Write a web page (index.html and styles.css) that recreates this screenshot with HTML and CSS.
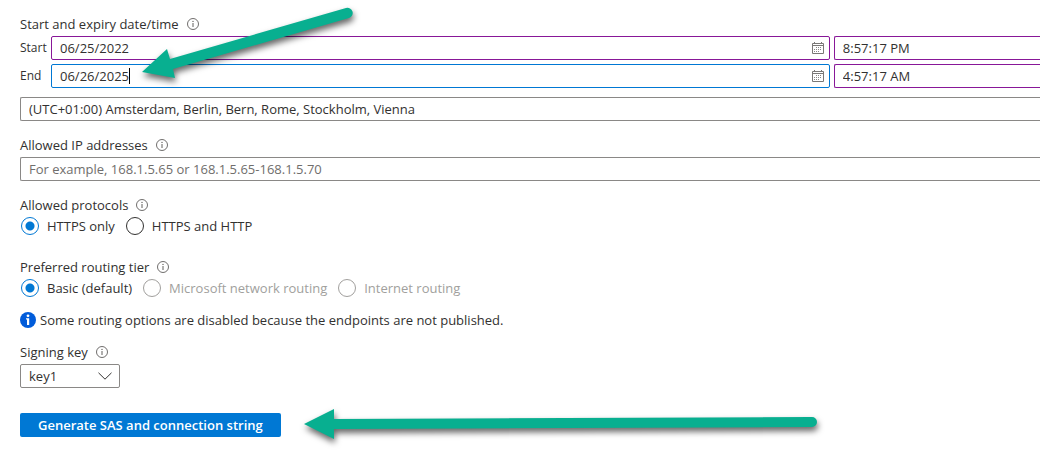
FILE: index.html
```html
<!DOCTYPE html>
<html lang="en">
<head>
  <meta charset="UTF-8" />
  <meta name="viewport" content="width=device-width, initial-scale=1.0" />
  <title>Shared access signature</title>
  <link rel="stylesheet" href="styles.css">
</head>
<body>
  <!-- Shared icons -->
  <svg class="sprite" aria-hidden="true">
    <symbol id="info" viewBox="0 0 12 12">
      <circle cx="6" cy="6" r="5.5" fill="none" stroke="#605e5c" stroke-width="0.9" />
      <path d="M6 5v4" stroke="#605e5c" stroke-width="1" />
      <circle cx="6" cy="3.4" r="0.7" fill="#605e5c" />
    </symbol>
    <symbol id="calendar" viewBox="0 0 12 12">
      <path d="M0.5 1.5h11v10h-11zM0.5 3.5h11M2.5 0v2M9.5 0v2" fill="none" stroke="#7a7876" />
      <path d="M4 5.5h6M2 7.5h8M2 9.5h6" stroke="#8a8886" stroke-dasharray="1 1" />
    </symbol>
  </svg>

  <form class="sas-form">
    <fieldset class="group">
      <legend class="group-label">Start and expiry date/time <svg class="info-icon"><use href="#info" /></svg></legend>
      <div class="date-rows">
        <div class="date-row">
          <label for="startDate">Start</label>
          <div class="date-box">
            <input id="startDate" type="text" value="06/25/2022">
            <button type="button" class="calendar-btn" aria-label="Pick start date"><svg><use href="#calendar" /></svg></button>
          </div>
          <input class="time-box" type="text" value="8:57:17 PM" aria-label="Start time">
        </div>
        <div class="date-row">
          <label for="endDate">End</label>
          <div class="date-box active">
            <input id="endDate" type="text" value="06/26/2025">
            <span class="caret"></span>
            <button type="button" class="calendar-btn" aria-label="Pick end date"><svg><use href="#calendar" /></svg></button>
          </div>
          <input class="time-box" type="text" value="4:57:17 AM" aria-label="End time">
        </div>
      </div>
      <select class="field wide timezone" aria-label="Time zone">
        <option>(UTC+01:00) Amsterdam, Berlin, Bern, Rome, Stockholm, Vienna</option>
      </select>
    </fieldset>

    <div class="group">
      <label class="group-label" for="ipRange">Allowed IP addresses <svg class="info-icon"><use href="#info" /></svg></label>
      <input class="field wide" id="ipRange" type="text" placeholder="For example, 168.1.5.65 or 168.1.5.65-168.1.5.70">
    </div>

    <fieldset class="group">
      <legend class="group-label">Allowed protocols <svg class="info-icon"><use href="#info" /></svg></legend>
      <div class="radios">
        <label><input type="radio" name="protocol" checked>HTTPS only</label>
        <label><input type="radio" name="protocol">HTTPS and HTTP</label>
      </div>
    </fieldset>

    <fieldset class="group routing">
      <legend class="group-label">Preferred routing tier <svg class="info-icon"><use href="#info" /></svg></legend>
      <div class="radios">
        <label><input type="radio" name="routing" checked>Basic (default)</label>
        <label class="disabled"><input type="radio" name="routing" disabled>Microsoft network routing</label>
        <label class="disabled"><input type="radio" name="routing" disabled>Internet routing</label>
      </div>
    </fieldset>

    <p class="notice">
      <svg viewBox="0 0 16 16">
        <circle cx="8" cy="8" r="8" fill="#015cda" />
        <circle cx="8" cy="3.8" r="1.4" fill="#fff" />
        <path d="M6 6.3h3.2V13H7V7.5H6z" fill="#fff" />
      </svg>
      Some routing options are disabled because the endpoints are not published.
    </p>

    <div class="group">
      <label class="group-label" for="signingKey">Signing key <svg class="info-icon"><use href="#info" /></svg></label>
      <div class="key-select">
        <select class="field" id="signingKey">
          <option>key1</option>
          <option>key2</option>
        </select>
        <svg class="chevron" viewBox="0 0 14 8"><path d="M0.5 0.8L7 7.2L13.5 0.8" fill="none" stroke="#323130" stroke-width="1" /></svg>
      </div>
    </div>

    <button type="button" class="generate">Generate SAS and connection string</button>
  </form>

  <!-- Arrows pointing at the end date and the generate button -->
  <svg class="arrows" width="840" height="458" aria-hidden="true">
    <g fill="#08af90">
      <path d="M142 72L167 49L170 59L346 8A5 5 0 0 1 349 18L173 69L175 78Z" />
      <path d="M304 424L334 409V419L812 417A5 5 0 0 1 812 427L334 429V439Z" />
    </g>
  </svg>
</body>
</html>
```

FILE: styles.css
```css
* { box-sizing: border-box; }
body {
  margin: 0;
  background: #fff;
  color: #323130;
  font-family: "Open Sans", "Noto Sans", sans-serif;
  font-size: 13px;
  line-height: 18px;
  overflow-x: hidden;
}
input, select, button { font: inherit; color: inherit; }
.sprite { position: absolute; width: 0; height: 0; }

.sas-form {
  display: flex;
  flex-direction: column;
  align-items: stretch;
  gap: 15px;
  padding: 15px 0 20px 20px;
}
.group {
  border: 0;
  margin: 0;
  padding: 0;
  min-width: 0;
}
.group-label {
  display: flex;
  align-items: center;
  gap: 8px;
  padding: 0;
  margin-bottom: 3px;
}
.info-icon { width: 12px; height: 12px; }
.routing { margin-top: 8px; }

/* Text fields and drop-downs */
.field, .date-box, .time-box {
  height: 24px;
  border: 1px solid #8a8886;
  border-radius: 2px;
  background: #fff;
  padding: 0 8px;
}
.field {
  display: block;
  width: 100%;
  appearance: none;
}
.field::placeholder { color: #706e6c; opacity: 1; }
.wide, .time-box {
  border-right: 0;
  border-top-right-radius: 0;
  border-bottom-right-radius: 0;
}
.timezone { margin-top: 9px; }

.date-rows { display: grid; gap: 4px; }
.date-row {
  display: grid;
  grid-template-columns: 27px 34fr 9fr;
  gap: 4px;
  align-items: center;
}
.date-row label { font-size: 12px; }
.date-box {
  display: flex;
  align-items: center;
  border-color: #881798;
  position: relative;
}
.date-box input {
  flex: 1;
  min-width: 0;
  border: 0;
  padding: 0;
  outline: 0;
  background: none;
}
.date-box.active { border-color: #0078d4; }
.time-box { border-color: #881798; min-width: 0; }
.caret {
  position: absolute;
  left: 77px;
  width: 1px;
  height: 16px;
  background: #000;
}
.calendar-btn {
  display: flex;
  border: 0;
  padding: 0;
  margin-right: -3px;
  background: none;
}
.calendar-btn svg { width: 12px; height: 12px; }

/* Radio buttons */
.radios { display: flex; gap: 10px; }
.radios label {
  display: flex;
  align-items: center;
  gap: 8px;
}
.radios input {
  appearance: none;
  width: 18px;
  height: 18px;
  margin: 0 0 0 1px;
  border: 1px solid #323130;
  border-radius: 50%;
}
.radios input:checked {
  border-color: #0078d4;
  background: radial-gradient(circle, #0078d4 4px, transparent 5px);
}
.radios input:disabled { border-color: #a19f9d; }
.disabled { color: #a19f9d; }

.notice {
  display: flex;
  align-items: center;
  gap: 4px;
  height: 16px;
  margin: 0;
}
.notice svg { width: 16px; height: 16px; }

.key-select { position: relative; width: 100px; }
.chevron {
  position: absolute;
  right: 8px;
  top: 8px;
  width: 14px;
  height: 8px;
  pointer-events: none;
}

.generate {
  align-self: flex-start;
  height: 24px;
  margin-top: 10px;
  padding: 0 18px;
  border: 0;
  border-radius: 2px;
  background: #0078d4;
  color: #fff;
  font-weight: 600;
}

.arrows {
  position: absolute;
  left: 0;
  top: 0;
  pointer-events: none;
}
.arrows path { filter: drop-shadow(1px 4px 3px rgba(0, 0, 0, 0.6)); }
```
